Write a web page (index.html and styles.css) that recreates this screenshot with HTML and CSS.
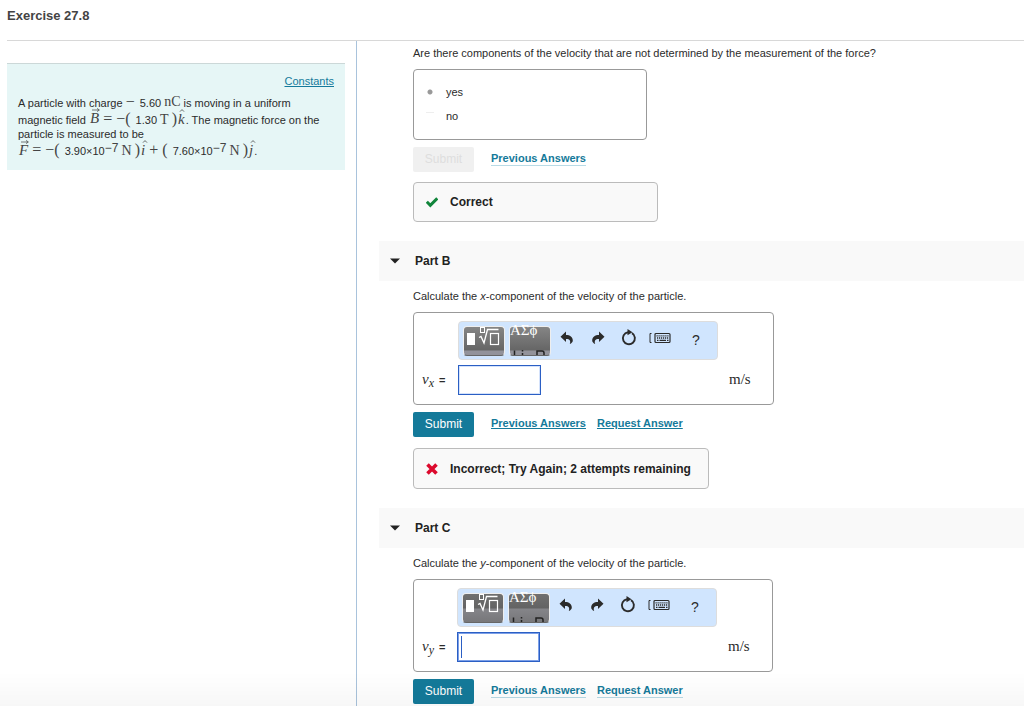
FILE: index.html
```html
<!DOCTYPE html>
<html lang="en">
<head>
<meta charset="utf-8">
<title>Exercise 27.8</title>
<link rel="stylesheet" href="styles.css">
</head>
<body>
<svg class="defs" aria-hidden="true">
  <symbol id="hat" viewBox="0 0 6 3"><path d="M1 2.6 3 .6 5 2.6" fill="none" stroke="currentColor" stroke-width=".8"/></symbol>
  <symbol id="vec" viewBox="0 0 8 4"><path d="M0 2H7M5 .4 7.4 2 5 3.6" fill="none" stroke="currentColor" stroke-width=".7"/></symbol>
  <symbol id="root" viewBox="0 0 40 28">
    <rect x="3" y="6" width="8" height="12" fill="#fff"/>
    <rect x="16.500" y=".5" width="4" height="5" fill="none" stroke="#fff"/>
    <path d="M15 10.500l2-1 3 6.500 3.500-13.500H34.500" fill="none" stroke="#fff" stroke-width="1.300"/>
    <rect x="26.500" y="6.500" width="8" height="11" fill="none" stroke="#fff" stroke-width="1.200"/>
  </symbol>
  <symbol id="undo" viewBox="0 0 14 14"><path d="M6 .5V4C10 4 12.800 6 12.800 9.500 12.800 11.200 11.500 12.300 9.800 13 11 9.800 9.500 7.800 6 8V11L.5 5.700Z" fill="currentColor"/></symbol>
  <symbol id="reset" viewBox="0 0 16 18"><path d="M11 4.100A6 6 0 1 1 7 3.300" fill="none" stroke="currentColor" stroke-width="1.900"/><path d="M6.500 0 11.500 3.200 6.500 6.200Z" fill="currentColor"/></symbol>
  <symbol id="keyboard" viewBox="0 0 22 12">
    <path d="M2.500 1.500H1V10.500H2.500" fill="none" stroke="currentColor"/>
    <rect x="6" y="1.500" width="15" height="9" rx="1" fill="none" stroke="currentColor" stroke-width="1.200"/>
    <path d="M7.500 3.800H20M8 6H20" stroke="currentColor" stroke-width="1.300" stroke-dasharray="1.200 .8"/>
    <path d="M8 8.300H9.500M10.500 8.300H17M18 8.300H19.500" stroke="currentColor" stroke-width="1.200"/>
  </symbol>
  <symbol id="stub" viewBox="0 0 40 7"><path d="M4.500 2.500V7M12.500 2V3.500M12.500 5V7M27 7V3H32Q34 3 34 5V7" fill="none" stroke="#222" stroke-width="1.500"/></symbol>
</svg>

<header class="page-header"><h1>Exercise 27.8</h1></header>
<main class="layout">
  <aside class="sidebar">
    <section class="problem">
      <a class="constants" href="#constants">Constants</a>
      <p class="problem-line">A particle with charge <span class="op open">−</span> 5.60 <span class="unit raised">nC</span> is moving in a uniform</p>
      <p class="problem-line">magnetic field <span class="accent raised"><i>B</i><svg class="vec"><use href="#vec"/></svg></span> <span class="op open">= −(</span> 1.30 <span class="unit">T</span> <span class="op">)</span><span class="accent"><i>k</i><svg class="hat"><use href="#hat"/></svg></span>. The magnetic force on the</p>
      <p class="problem-line tight">particle is measured to be</p>
      <p class="problem-line formula"><span class="accent"><i>F</i><svg class="vec"><use href="#vec"/></svg></span> <span class="op open">= −(</span> 3.90×10<sup>−7</sup> <span class="unit">N</span> <span class="op">)</span><span class="accent"><i>i</i><svg class="hat"><use href="#hat"/></svg></span> <span class="op open">+ (</span> 7.60×10<sup>−7</sup> <span class="unit">N</span> <span class="op">)</span><span class="accent"><i>j</i><svg class="hat"><use href="#hat"/></svg></span>.</p>
    </section>
  </aside>

  <div class="parts">
    <section class="part-body first">
      <p class="question">Are there components of the velocity that are not determined by the measurement of the force?</p>
      <div class="choices">
        <label class="choice"><input type="radio" name="a" checked>yes</label>
        <label class="choice"><input type="radio" name="a">no</label>
      </div>
      <div class="actions">
        <button class="submit" disabled>Submit</button>
        <a class="action-link soft" href="#previous-a">Previous Answers</a>
      </div>
      <div class="feedback correct">
        <svg class="mark" viewBox="0 0 12 12"><path d="M.8 5.800 4.300 9.300 11.300 2.200" fill="none" stroke="#11853b" stroke-width="3"/></svg>
        <span>Correct</span>
      </div>
    </section>

    <h2 class="part-title"><svg class="caret" viewBox="0 0 10 6"><path d="M0 .5H10L5 5.500Z" fill="#222"/></svg>Part B</h2>
    <section class="part-body">
      <p class="question">Calculate the <i>x</i>-component of the velocity of the particle.</p>
      <div class="answer">
        <div class="toolbar">
          <button class="tile" aria-label="Templates"><svg><use href="#root"/></svg></button>
          <button class="tile symbols" aria-label="Symbols"><span class="greek">ΑΣϕ</span><svg class="stub"><use href="#stub"/></svg></button>
          <button class="tool" aria-label="Undo"><svg class="arrow"><use href="#undo"/></svg></button>
          <button class="tool" aria-label="Redo"><svg class="arrow flip"><use href="#undo"/></svg></button>
          <button class="tool" aria-label="Reset"><svg class="round"><use href="#reset"/></svg></button>
          <button class="tool" aria-label="Keyboard shortcuts"><svg class="keys"><use href="#keyboard"/></svg></button>
          <button class="tool help" aria-label="Help">?</button>
        </div>
        <label class="variable" for="vx"><i>v<sub>x</sub></i> <span class="equals">=</span></label>
        <div class="entry"><input id="vx" type="text"></div>
        <span class="answer-unit">m/s</span>
      </div>
      <div class="actions">
        <button class="submit">Submit</button>
        <a class="action-link" href="#previous-b">Previous Answers</a>
        <a class="action-link" href="#request-b">Request Answer</a>
      </div>
      <div class="feedback incorrect">
        <svg class="mark" viewBox="0 0 12 12"><path d="M1.500 1.500 10.500 10.500M10.500 1.500 1.500 10.500" fill="none" stroke="#dc0a2d" stroke-width="3.600"/></svg>
        <span>Incorrect; Try Again; 2 attempts remaining</span>
      </div>
    </section>

    <h2 class="part-title"><svg class="caret" viewBox="0 0 10 6"><path d="M0 .5H10L5 5.500Z" fill="#222"/></svg>Part C</h2>
    <section class="part-body">
      <p class="question">Calculate the <i>y</i>-component of the velocity of the particle.</p>
      <div class="answer narrow">
        <div class="toolbar">
          <button class="tile even" aria-label="Templates"><svg><use href="#root"/></svg></button>
          <button class="tile symbols even" aria-label="Symbols"><span class="greek">ΑΣϕ</span><svg class="stub"><use href="#stub"/></svg></button>
          <button class="tool" aria-label="Undo"><svg class="arrow"><use href="#undo"/></svg></button>
          <button class="tool" aria-label="Redo"><svg class="arrow flip"><use href="#undo"/></svg></button>
          <button class="tool" aria-label="Reset"><svg class="round"><use href="#reset"/></svg></button>
          <button class="tool" aria-label="Keyboard shortcuts"><svg class="keys"><use href="#keyboard"/></svg></button>
          <button class="tool help" aria-label="Help">?</button>
        </div>
        <label class="variable" for="vy"><i>v<sub>y</sub></i> <span class="equals">=</span></label>
        <div class="entry active"><input id="vy" type="text"></div>
        <span class="answer-unit">m/s</span>
      </div>
      <div class="actions">
        <button class="submit">Submit</button>
        <a class="action-link soft" href="#previous-c">Previous Answers</a>
        <a class="action-link soft" href="#request-c">Request Answer</a>
      </div>
    </section>
  </div>
</main>
<div class="fade"></div>
</body>
</html>
```

FILE: styles.css
```css
* { box-sizing: border-box; }
body {
  margin: 0;
  min-height: 100vh;
  display: flex;
  flex-direction: column;
  font: 11px/14px "Liberation Sans", Arial, sans-serif;
  color: #2b2b2b;
  background: #fff;
}
h1, h2, p { margin: 0; }
button { font: inherit; border: 0; padding: 0; background: none; color: inherit; }
.defs { position: absolute; width: 0; height: 0; }

.page-header { margin-left: 7px; padding: 7px 0 16px; border-bottom: 1px solid #d8d8d8; }
h1 { font-size: 13px; line-height: 17px; color: #444; }

.layout { flex: 1; display: grid; grid-template-columns: 357px minmax(0, 1fr); }
.sidebar { border-right: 1px solid #a9c3dc; padding: 22px 11px 0 7px; }
.problem { background: #e6f6f6; border-top: 1px solid #ccd8d8; padding: 10px 11px 8px; display: flex; flex-direction: column; }
.constants { align-self: flex-end; color: #147a9c; margin-bottom: 7px; }
.problem-line { line-height: 17px; white-space: nowrap; }
.problem-line.tight { line-height: 11px; }
.problem-line.formula { line-height: 21px; margin-top: 1px; }
.op, .unit, .accent { font-family: "Liberation Serif", serif; font-size: 14px; line-height: 10px; color: #444; }
.op { font-size: 16px; }
.open { margin-right: 2px; }
.accent { position: relative; margin: 0 1px; font-size: 15px; }
.raised { vertical-align: 1px; }
.hat { position: absolute; left: 1px; top: -2px; width: 6px; height: 3px; }
.vec { position: absolute; left: 2px; top: -2px; width: 8px; height: 4px; }
sup { font-size: 12px; line-height: 8px; vertical-align: 3px; color: #444; }

.parts { padding-left: 22px; }
.part-body { padding: 8px 0 19px 34px; }
.part-body.first { padding-top: 5px; }
.question { margin-bottom: 9px; }
.choices, .answer { border: 1px solid #999; border-radius: 4px; }
.choices { width: 234px; padding: 10px 12px 11px; }
.choice { display: flex; align-items: center; gap: 12px; height: 24px; }
.choice input { appearance: none; margin: 0; width: 8px; height: 8px; border-top: 1px solid #eee; }
.choice input:checked { background: radial-gradient(circle, #999 2px, transparent 3px); border: 0; }

.actions { display: flex; align-items: flex-start; margin-top: 7px; }
.submit { width: 61px; height: 25px; padding-bottom: 2px; margin-right: 17px; border-radius: 2px; background: #147a9a; color: #fff; font-size: 12px; }
.submit:disabled { background: #f0f0f0; color: #dedede; }
.action-link { margin: 4px 11px 0 0; font-weight: bold; color: #147a9a; }
.action-link.soft { text-decoration: none; border-bottom: 1px solid #b9dbe6; }
.feedback { display: flex; align-items: center; margin-top: 11px; width: fit-content; min-width: 296px; height: 41px; border: 1px solid #bbb; border-radius: 4px; background: #f9f9f9; font-size: 12px; font-weight: bold; color: #222; padding: 0 12px; }
.mark { width: 12px; height: 12px; margin-right: 12px; }
.correct { min-width: 245px; height: 40px; margin-top: 10px; }

.part-title { display: flex; align-items: center; height: 40px; background: #f9f9f9; padding-left: 11px; font-size: 12px; color: #222; }
.caret { width: 10px; height: 6px; margin-right: 15px; }

.answer { display: grid; grid-template-columns: 36px 260px auto; row-gap: 5px; width: fit-content; padding: 8px 22px 9px 8px; }
.answer.narrow { grid-template-columns: 35px 260px auto; }
.toolbar { grid-column: 2; grid-row: 1; display: flex; align-items: flex-start; height: 39px; padding: 4px 0 4px 4px; background: #d0e5fe; border: 1px solid #ddd; border-radius: 4px; }
.tile { flex: none; width: 42px; height: 30px; margin-right: 4px; border-radius: 4px; background: linear-gradient(#858585, #666 23px, #92929a 24px); border: 1px solid #eee; border-bottom-color: #666; }
.tile.even { background: linear-gradient(#707070, #636363 14px, #858589 15px, #77777a); }
.tile svg { display: block; width: 40px; height: 28px; }
.symbols { display: flex; flex-direction: column; align-items: flex-start; justify-content: space-between; margin-right: 0; }
.greek { font: 15px/7px "Liberation Serif", serif; color: #fff; }
.tile .stub { height: 7px; }
.tool { flex: none; width: 31px; height: 24px; display: flex; align-items: center; justify-content: center; }
.arrow { width: 14px; height: 14px; }
.flip { transform: scaleX(-1); }
.round { width: 16px; height: 18px; }
.keys { width: 22px; height: 12px; }
.help { width: 42px; height: 28px; font-size: 14px; }
.variable { grid-column: 1; grid-row: 2; font-size: 11px; line-height: 28px; white-space: nowrap; }
.variable i { font-family: "Liberation Serif", serif; font-size: 15px; }
.variable sub { font-size: 12px; line-height: 8px; vertical-align: -3px; }
.equals { font-weight: bold; margin-left: 2px; }
.entry { grid-column: 2; grid-row: 2; position: relative; width: 83px; height: 30px; }
.entry input { width: 100%; height: 100%; border: 1px solid #2b5fc4; border-radius: 0; background: #fff; outline: 0; padding: 2px 4px; font: inherit; box-shadow: inset 0 0 0 1px #d4e2fb; }
.active input { box-shadow: inset 0 0 0 1px #7c9fe8; }
.active::after { content: ""; position: absolute; left: 4px; top: 4px; width: 1px; height: 22px; background: #2b5fc4; }
.answer-unit { grid-column: 3; grid-row: 2; padding-left: 11px; font: 15px/28px "Liberation Serif", serif; }
.part-body:last-child { padding-bottom: 0; }
.fade { position: fixed; inset: auto 0 0; height: 34px; background: linear-gradient(transparent, rgba(0, 0, 0, .03)); pointer-events: none; }
```
